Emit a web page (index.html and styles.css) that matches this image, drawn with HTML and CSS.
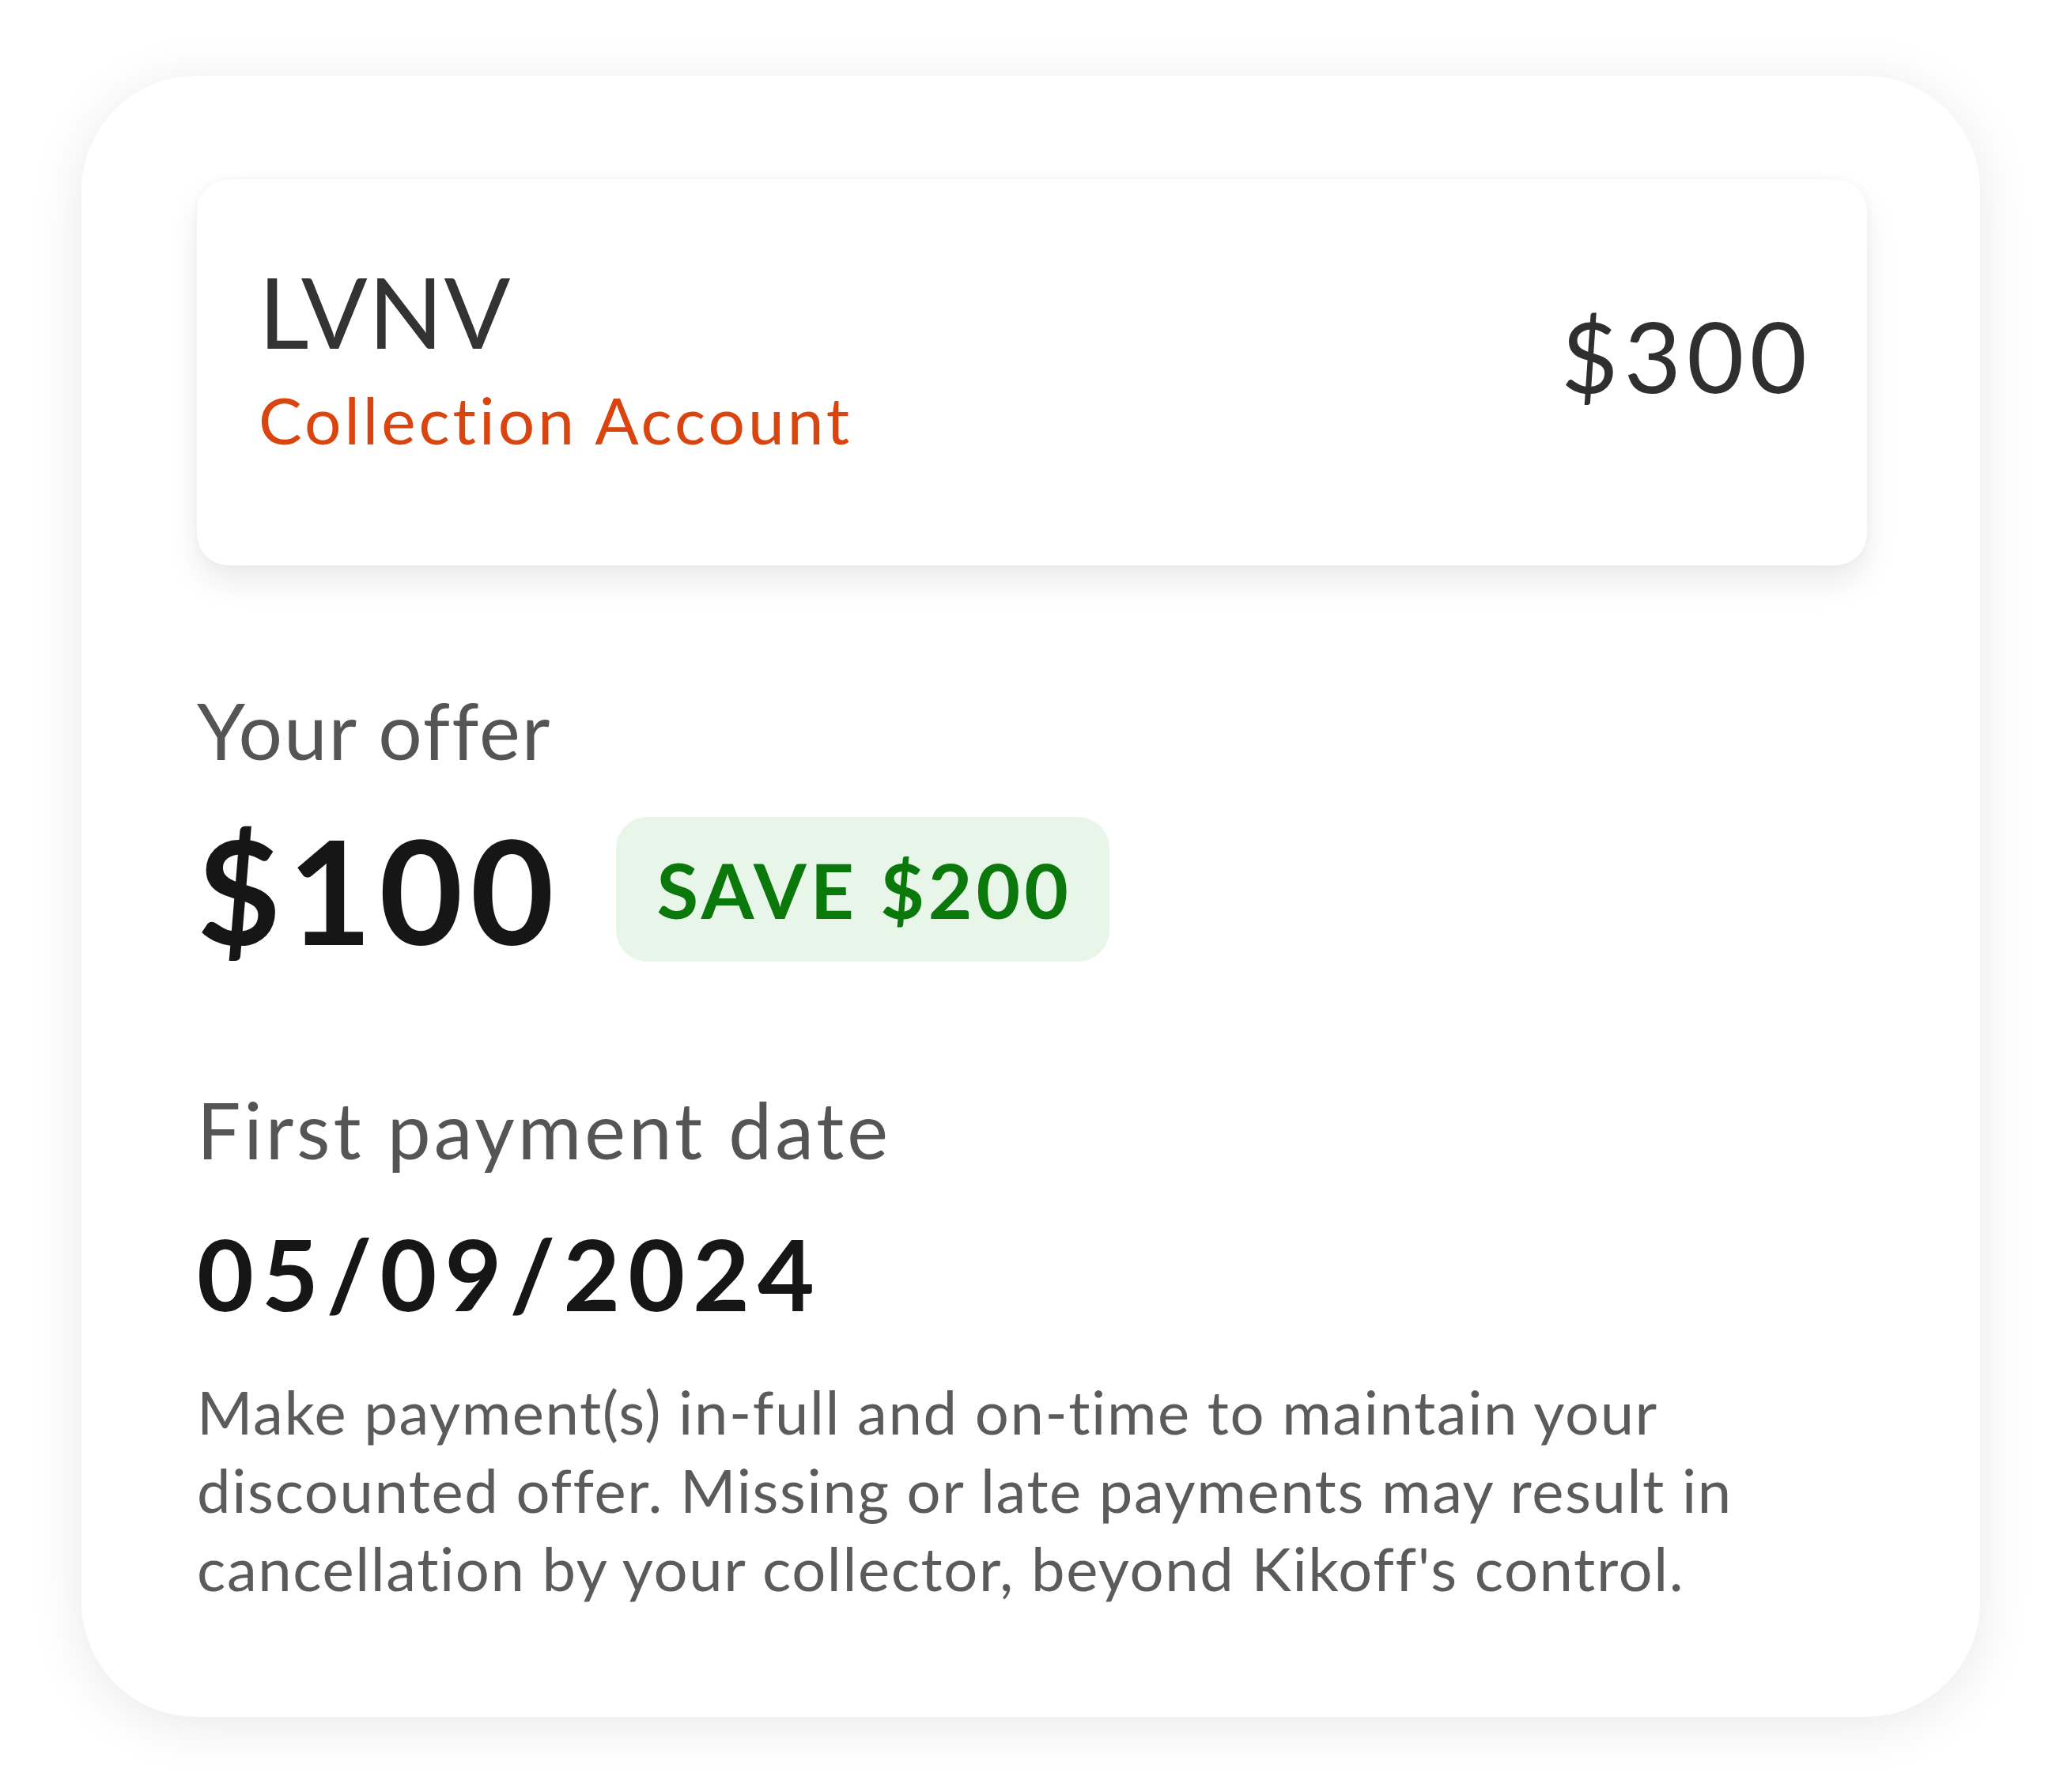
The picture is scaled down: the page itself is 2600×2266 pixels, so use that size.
FILE: index.html
```html
<!DOCTYPE html>
<html lang="en">

<head>
  <meta charset="UTF-8">
  <meta name="viewport" content="width=device-width, initial-scale=1.0">
  <title>Settlement offer</title>
  <link rel="stylesheet" href="styles.css">
</head>

<body>
  <div class="offer-card">
    <div class="account">
      <div class="account-info">
        <p class="creditor">LVNV</p>
        <p class="account-type">Collection Account</p>
      </div>
      <p class="balance">$300</p>
    </div>

    <p class="label offer-label">Your offer</p>
    <div class="offer-row">
      <span class="offer-amount">$100</span>
      <span class="savings">SAVE $200</span>
    </div>

    <p class="label date-label">First payment date</p>
    <p class="pay-date">05/09/2024</p>

    <p class="notice">Make payment(s) in-full and on-time to maintain your discounted offer. Missing or late payments may result in cancellation by your collector, beyond Kikoff's control.</p>
  </div>
</body>

</html>
```

FILE: styles.css
```css
html,
body {
  margin: 0;
  background: #ffffff;
  font-family: Lato, "Open Sans", sans-serif;
  font-variant-ligatures: none;
}

body {
  padding: 96px 96px 97px 103px;
}

p {
  margin: 0;
  line-height: 1.2;
}

.offer-card {
  width: 2401px;
  box-sizing: border-box;
  padding: 131px 143px 139px 146px;
  border-radius: 145px;
  background: #ffffff;
  box-shadow: rgba(0, 0, 0, 0.09) 0px 10px 70px;
}

/* account summary at the top */
.account {
  display: flex;
  justify-content: space-between;
  align-items: center;
  padding: 92px 69px 136px 78px;
  border-radius: 40px;
  background: #ffffff;
  box-shadow: rgba(0, 0, 0, 0.08) 0px 22px 40px, rgba(0, 0, 0, 0.04) 0px 0px 12px;
}

.creditor {
  font-size: 124px;
  letter-spacing: 1px;
  color: #333333;
}

.account-type {
  margin-top: 13px;
  font-size: 82px;
  letter-spacing: 4px;
  color: #d9440f;
}

.balance {
  font-size: 125px;
  letter-spacing: 7px;
  color: #2f2f2f;
}

/* offer details */
.label {
  font-size: 98px;
  color: #555555;
}

.offer-label {
  letter-spacing: 2px;
  margin-top: 150px;
}

.offer-row {
  display: flex;
  align-items: center;
  gap: 69px;
  margin-top: 32px;
}

.offer-amount {
  font-size: 183px;
  font-weight: 700;
  line-height: 1.2;
  letter-spacing: 9px;
  color: #161616;
}

.savings {
  padding: 34px 47px 34px 52px;
  border-radius: 40px;
  background: #e7f6e8;
  color: #0b780b;
  font-size: 96px;
  font-weight: 700;
  line-height: 1.2;
  letter-spacing: 5px;
}

.date-label {
  letter-spacing: 4px;
  margin-top: 136px;
}

.pay-date {
  margin-top: 48px;
  font-size: 124px;
  font-weight: 700;
  letter-spacing: 10px;
  color: #161616;
}

.notice {
  margin-top: 50px;
  font-size: 76px;
  line-height: 99px;
  letter-spacing: 1.6px;
  color: #5b5b5b;
}
```
